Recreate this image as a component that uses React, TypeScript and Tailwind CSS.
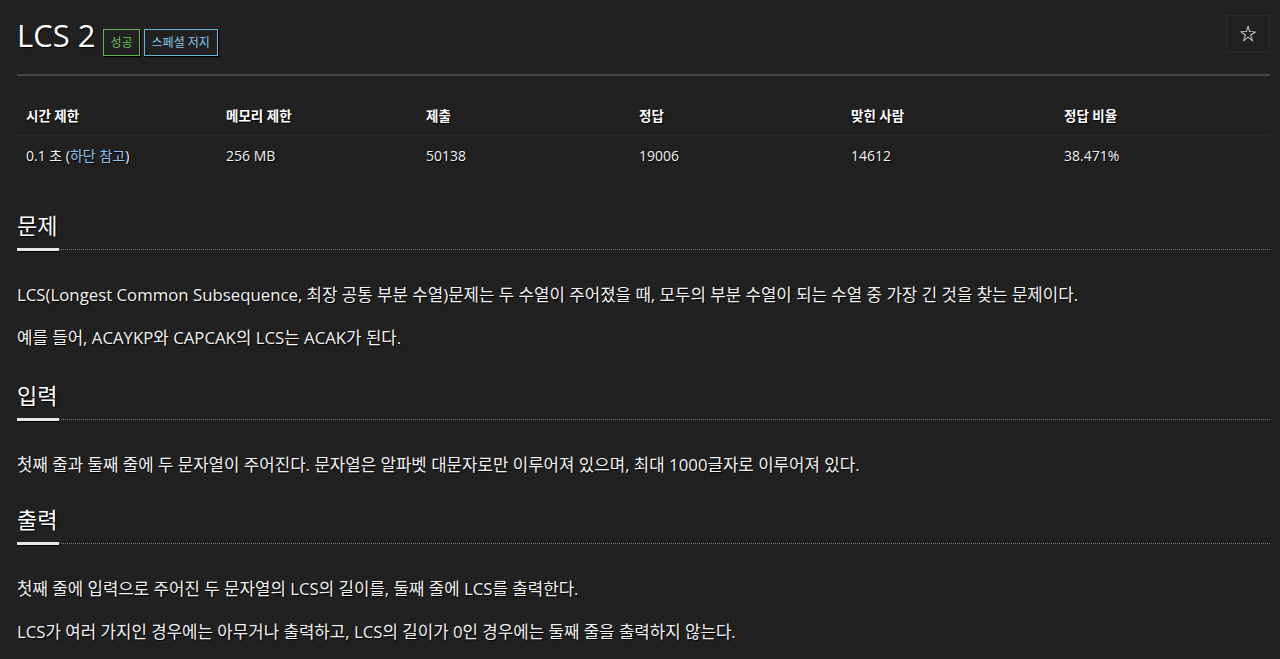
import React from "react";

const font = { fontFamily: '"Open Sans", "Noto Sans CJK KR", sans-serif' };

function Section({ title, className, children }: { title: string; className: string; children: React.ReactNode }) {
  return (
    <section className={className}>
      <h2 className="text-[22px] leading-[30px] font-normal text-white [text-shadow:1px_1px_1px_#000]">{title}</h2>
      <div className="flex items-center h-[3px] mt-[8px]">
        <div className="w-[42px] h-[3px] bg-[#e8e8e8] shadow-[0_1px_1px_#000]" />
        <div className="flex-1 border-t border-dotted border-[#777]" />
      </div>
      <div className="mt-[31px] flex flex-col gap-[17px]">{children}</div>
    </section>
  );
}

function P({ children }: { children: React.ReactNode }) {
  return <p className="text-[16.8px] leading-[26px] text-[#f2f2f2] [text-shadow:1px_1px_1px_#000]">{children}</p>;
}

export default function App() {
  const headers = ["시간 제한", "메모리 제한", "제출", "정답", "맞힌 사람", "정답 비율"];
  const values: React.ReactNode[] = [
    <span>
      0.1 초 (<span className="text-[#8ec3ee]">하단 참고</span>)
    </span>,
    "256 MB",
    "50138",
    "19006",
    "14612",
    "38.471%",
  ];
  return (
    <div className="flex flex-col min-h-[659px] bg-[#212121] pl-[17px] pr-[10px] pt-[15px] pb-[20px] text-white" style={font}>
      <div className="flex items-start justify-between border-b-2 border-[#444] pb-[21px]">
        <div className="flex items-end gap-[8px] pt-[2px]">
          <h1 className="text-[31px] leading-[36px] font-normal text-white [text-shadow:1px_1px_1px_#000]">LCS 2</h1>
          <div className="flex gap-[4px] mb-[-3px]">
            <span className="border border-[#62b14f] text-[#6cbf58] text-[12px] leading-[25px] px-[6px] shadow-[1px_1px_1px_#000]">성공</span>
            <span className="border border-[#6cb6da] text-[#85c6e6] text-[12px] leading-[25px] px-[7px] shadow-[1px_1px_1px_#000]">스페셜 저지</span>
          </div>
        </div>
        <div className="w-[44px] h-[38px] border border-[#2b2b2b] flex items-center justify-center text-[17px] text-white">☆</div>
      </div>

      <div className="mt-[21px] grid grid-cols-[200px_200px_213px_212px_213px_1fr]">
        {headers.map((h) => (
          <div key={h} className="px-[9px] h-[39px] flex items-center text-[13.5px] font-bold text-white border-b border-[#2a2a2a] [text-shadow:1px_1px_1px_#000]">
            {h}
          </div>
        ))}
        {values.map((v, i) => (
          <div key={i} className="px-[9px] h-[38px] flex items-center text-[14px] text-[#f2f2f2] [text-shadow:1px_1px_1px_#000]">
            {v}
          </div>
        ))}
      </div>

      <Section title="문제" className="mt-[36px]">
        <P>LCS(Longest Common Subsequence, 최장 공통 부분 수열)문제는 두 수열이 주어졌을 때, 모두의 부분 수열이 되는 수열 중 가장 긴 것을 찾는 문제이다.</P>
        <P>예를 들어, ACAYKP와 CAPCAK의 LCS는 ACAK가 된다.</P>
      </Section>
      <Section title="입력" className="mt-[29px]">
        <P>첫째 줄과 둘째 줄에 두 문자열이 주어진다. 문자열은 알파벳 대문자로만 이루어져 있으며, 최대 1000글자로 이루어져 있다.</P>
      </Section>
      <Section title="출력" className="mt-[26px]">
        <P>첫째 줄에 입력으로 주어진 두 문자열의 LCS의 길이를, 둘째 줄에 LCS를 출력한다.</P>
        <P>LCS가 여러 가지인 경우에는 아무거나 출력하고, LCS의 길이가 0인 경우에는 둘째 줄을 출력하지 않는다.</P>
      </Section>
    </div>
  );
}
